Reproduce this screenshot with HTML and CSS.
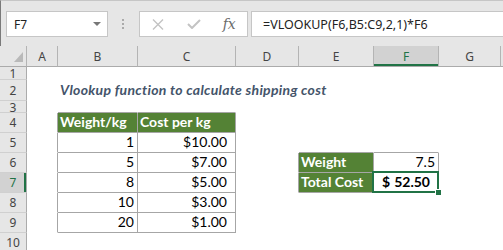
FILE: index.html
```html
<!DOCTYPE html>
<html lang="en">
<head>
  <meta charset="UTF-8" />
  <title>Vlookup shipping cost</title>
  <link rel="stylesheet" href="styles.css">
</head>
<body>
  <div class="fbar">
    <div class="namebox"><span>F7</span><span class="caret"></span></div>
    <div class="grip"><i></i><i></i><i></i></div>
    <div class="fxbox">
      <span class="btn"><svg width="12" height="11" viewBox="0 0 12 11"><path d="M1 0.5 L11 10.5 M11 0.5 L1 10.5" stroke="#c3c3c3" stroke-width="1.4" fill="none"/></svg></span>
      <span class="btn"><svg width="14" height="10" viewBox="0 0 14 10"><path d="M1 5 L5 9 L13 1" stroke="#c3c3c3" stroke-width="2" fill="none"/></svg></span>
      <span class="btn fx">fx</span>
    </div>
    <div class="formula">=VLOOKUP(F6,B5:C9,2,1)*F6</div>
  </div>

  <div class="sheet">
    <div class="ch corner"><span class="tri"></span></div>
    <div class="ch">A</div><div class="ch">B</div><div class="ch">C</div><div class="ch">D</div>
    <div class="ch">E</div><div class="ch sel">F</div><div class="ch">G</div><div class="ch"></div>

    <div class="rh short">1</div>
    <div class="c"></div><div class="c"></div><div class="c"></div><div class="c"></div><div class="c"></div><div class="c"></div><div class="c"></div><div class="c"></div>

    <div class="rh">2</div>
    <div class="c"></div><div class="c title">Vlookup function to calculate shipping cost</div><div class="c"></div><div class="c"></div><div class="c"></div><div class="c"></div><div class="c"></div><div class="c"></div>

    <div class="rh short top">3</div>
    <div class="c"></div><div class="c bt"></div><div class="c bt"></div><div class="c"></div><div class="c"></div><div class="c"></div><div class="c"></div><div class="c"></div>

    <div class="rh">4</div>
    <div class="c bl"></div><div class="c bd hd">Weight/kg</div><div class="c bd hd">Cost per kg</div><div class="c"></div><div class="c"></div><div class="c"></div><div class="c"></div><div class="c"></div>

    <div class="rh">5</div>
    <div class="c bl"></div><div class="c bd num">1</div><div class="c bd num cur">$10.00</div><div class="c"></div><div class="c bt"></div><div class="c bt"></div><div class="c"></div><div class="c"></div>

    <div class="rh">6</div>
    <div class="c bl"></div><div class="c bd num">5</div><div class="c bd num cur">$7.00</div><div class="c bl"></div><div class="c bd hd">Weight</div><div class="c bd num">7.5</div><div class="c"></div><div class="c"></div>

    <div class="rh sel">7</div>
    <div class="c bl"></div><div class="c bd num">8</div><div class="c bd num cur">$5.00</div><div class="c bl"></div><div class="c bd hd">Total Cost</div>
    <div class="c bd acct active"><span>$</span><span>52.50</span><div class="cursor"><i class="handle"></i></div></div>
    <div class="c"></div><div class="c"></div>

    <div class="rh">8</div>
    <div class="c bl"></div><div class="c bd num">10</div><div class="c bd num cur">$3.00</div><div class="c"></div><div class="c"></div><div class="c"></div><div class="c"></div><div class="c"></div>

    <div class="rh">9</div>
    <div class="c bl"></div><div class="c bd num">20</div><div class="c bd num cur">$1.00</div><div class="c"></div><div class="c"></div><div class="c"></div><div class="c"></div><div class="c"></div>

    <div class="rh">10</div>
    <div class="c"></div><div class="c"></div><div class="c"></div><div class="c"></div><div class="c"></div><div class="c"></div><div class="c"></div><div class="c"></div>
  </div>
</body>
</html>
```

FILE: styles.css
```css
* {
  box-sizing: border-box;
}

body {
  margin: 0;
  background: #fff;
  overflow: hidden;
  font-family: 'Noto Sans', 'Open Sans', sans-serif;
}

/* formula bar */
.fbar {
  height: 46px;
  background: #e6e6e6;
  border-top: 1px solid #c6c6c6;
  border-left: 1px solid #7a7a7a;
  padding: 10px 0 0 5px;
  display: flex;
  align-items: flex-start;
  overflow: hidden;
  white-space: nowrap;
}

.fbar > div {
  flex-shrink: 0;
}

.namebox, .fxbox, .formula {
  height: 26px;
  background: #fff;
  border: 1px solid #c6c6c6;
  display: flex;
  align-items: center;
}

.namebox {
  width: 102px;
  padding: 0 6px 0 7px;
  justify-content: space-between;
  font-size: 12px;
  color: #222;
}

.caret {
  border-left: 4px solid transparent;
  border-right: 4px solid transparent;
  border-top: 4px solid #777;
}

.grip {
  width: 3px;
  margin: 8px 14px 0;
  display: flex;
  flex-direction: column;
  gap: 2px;
}

.grip i {
  width: 2px;
  height: 2px;
  background: #aaa;
}

.fxbox {
  width: 109px;
}

.btn {
  flex: 1;
  display: flex;
  justify-content: center;
  align-items: center;
}

.fx {
  font-family: 'DejaVu Serif', serif;
  font-style: italic;
  font-size: 14px;
  color: #6b6b6b;
}

.formula {
  margin-left: 3px;
  width: 300px;
  padding-left: 11px;
  font-size: 12.5px;
  color: #222;
}

/* grid */
.sheet {
  display: grid;
  grid-template-columns: 27px 31px 80px 98px 63px 75px 65px 62px 1fr;
  grid-template-rows: 21px 13px 21px 12px 20px 20px 20px 20px 20px 20px 20px;
  font-family: 'Lato', sans-serif;
  font-size: 14px;
  color: #000;
}

.ch, .rh {
  background: #e6e6e6;
  border-right: 1px solid #b4b4b4;
  border-bottom: 1px solid #b4b4b4;
  color: #444;
  font-family: 'Noto Sans', sans-serif;
  font-size: 12px;
  display: flex;
  justify-content: center;
  overflow: hidden;
}

.ch {
  align-items: center;
  border-bottom-color: #ababab;
}

.rh {
  align-items: flex-end;
  padding-bottom: 1px;
  line-height: 16px;
  border-right-color: #ababab;
  border-bottom-color: #d0d0d0;
}

.rh.short {
  line-height: 11px;
  padding-bottom: 0;
}

.rh.top {
  align-items: flex-start;
  padding-top: 1px;
}

.ch.sel, .rh.sel {
  background: #d2d2d2;
  color: #217346;
}

.ch.sel {
  box-shadow: inset 0 -2px #217346;
}

.rh.sel {
  box-shadow: inset -2px 0 #217346;
}

.corner {
  justify-content: flex-end;
  align-items: flex-end;
  padding: 0 3px 4px 0;
}

.tri {
  border-left: 9px solid transparent;
  border-bottom: 10px solid #b9b9b9;
}

.c {
  border-right: 1px solid transparent;
  border-bottom: 1px solid transparent;
  display: flex;
  align-items: flex-end;
  padding: 0 3px 2px 2px;
  line-height: 16px;
  white-space: nowrap;
}

.title {
  font-weight: bold;
  font-style: italic;
  letter-spacing: 0.3px;
  color: #44546a;
  overflow: visible;
}

.bd {
  border-right-color: #a6a6a6;
  border-bottom-color: #a6a6a6;
}

.bl {
  border-right-color: #a6a6a6;
}

.bt {
  border-bottom-color: #a6a6a6;
}

.hd {
  background: #548235;
  color: #fff;
  font-weight: bold;
}

.num {
  justify-content: flex-end;
}

.cur {
  padding-right: 8px;
}

.acct {
  justify-content: space-between;
  padding: 0 8px 2px 8px;
  font-weight: bold;
}

.active {
  position: relative;
}

.cursor {
  position: absolute;
  left: -2px;
  top: -2px;
  right: -1px;
  bottom: -1px;
  border: 2px solid #217346;
}

.handle {
  position: absolute;
  right: -5px;
  bottom: -5px;
  width: 7px;
  height: 7px;
  background: #217346;
  border: 1px solid #fff;
}
```
